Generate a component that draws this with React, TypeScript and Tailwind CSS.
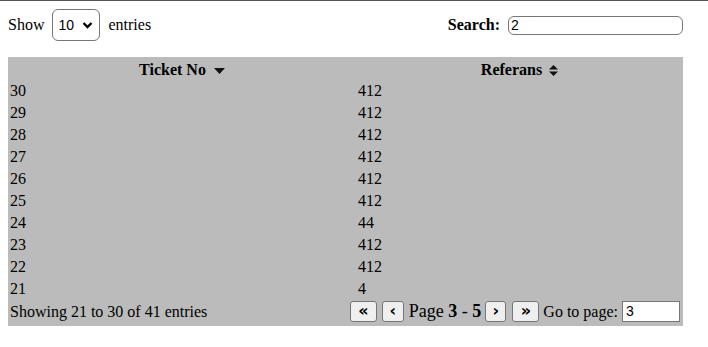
import React from 'react';

const rows = [
  { ticket: 30, ref: '412' },
  { ticket: 29, ref: '412' },
  { ticket: 28, ref: '412' },
  { ticket: 27, ref: '412' },
  { ticket: 26, ref: '412' },
  { ticket: 25, ref: '412' },
  { ticket: 24, ref: '44' },
  { ticket: 23, ref: '412' },
  { ticket: 22, ref: '412' },
  { ticket: 21, ref: '4' },
];

const SortDown = () => (
  <svg width="11" height="6" viewBox="0 0 11 6" className="ml-[8px] mt-[2px]">
    <path d="M0 0h11L5.5 6z" fill="#111" />
  </svg>
);

const SortBoth = () => (
  <svg width="9" height="11" viewBox="0 0 9 11" className="ml-[7px]">
    <path d="M0 4.5h9L4.5 0z M0 6.5h9L4.5 11z" fill="#111" />
  </svg>
);

const PageButton: React.FC<{ label: string; width: string }> = ({ label, width }) => (
  <button
    className={`${width} h-[21px] flex items-center justify-center border border-[#767676] rounded-[3px] bg-[#efefef] text-[16px] font-bold leading-none text-black font-['DejaVu_Sans',sans-serif] pb-[1px]`}
  >
    {label}
  </button>
);

const App: React.FC = () => {
  return (
    <div className="min-h-screen bg-white border-t border-[#555] font-['Liberation_Serif',serif] text-[16px] text-black px-[8px] pt-[8px]">
      {/* toolbar */}
      <div className="flex items-center justify-between w-[675px] h-[32px]">
        <div className="flex items-center">
          <span>Show</span>
          <div className="ml-[8px] mr-[8px] w-[48px] h-[32px] border border-[#767676] rounded-[6px] flex items-center justify-between pl-[5px] pr-[6px] text-[14px] font-['Liberation_Sans',sans-serif]">
            <span>10</span>
            <svg width="11" height="8" viewBox="0 0 11 8">
              <path d="M1.5 2L5.5 6l4-4" stroke="#000" strokeWidth="2.4" fill="none" />
            </svg>
          </div>
          <span>entries</span>
        </div>
        <div className="flex items-center">
          <span className="font-bold mr-[8px]">Search:</span>
          <div className="w-[175px] h-[19px] border border-[#767676] rounded-[6px] flex items-center pl-[2px] text-[14px] font-['Liberation_Sans',sans-serif]">
            2
          </div>
        </div>
      </div>

      {/* table */}
      <div className="mt-[16px] w-[675px] bg-[#bbbbbb]">
        <div className="grid grid-cols-[348px_1fr] h-[22px] pt-[1px] font-bold">
          <div className="flex items-center justify-center">
            Ticket No
            <SortDown />
          </div>
          <div className="flex items-center justify-center">
            Referans
            <SortBoth />
          </div>
        </div>
        {rows.map((r) => (
          <div key={r.ticket} className="grid grid-cols-[348px_1fr] h-[22px]">
            <div className="flex items-center pl-[2px]">{r.ticket}</div>
            <div className="flex items-center pl-[2px]">{r.ref}</div>
          </div>
        ))}
        <div className="flex items-center justify-between h-[27px] pb-[2px] pl-[2px] pr-[3px]">
          <span>Showing 21 to 30 of 41 entries</span>
          <div className="flex items-center">
            <PageButton label="«" width="w-[27px]" />
            <div className="ml-[5px]">
              <PageButton label="‹" width="w-[22px]" />
            </div>
            <span className="ml-[5px] text-[18px]">
              Page <b>3</b> - <b>5</b>
            </span>
            <div className="ml-[4px]">
              <PageButton label="›" width="w-[21px]" />
            </div>
            <div className="ml-[6px]">
              <PageButton label="»" width="w-[27px]" />
            </div>
            <span className="ml-[4px]">Go to page:</span>
            <div className="ml-[4px] w-[58px] h-[21px] bg-white border border-[#767676] flex items-center pl-[3px] text-[14px] font-['Liberation_Sans',sans-serif]">
              3
            </div>
          </div>
        </div>
      </div>
    </div>
  );
};

export default App;
